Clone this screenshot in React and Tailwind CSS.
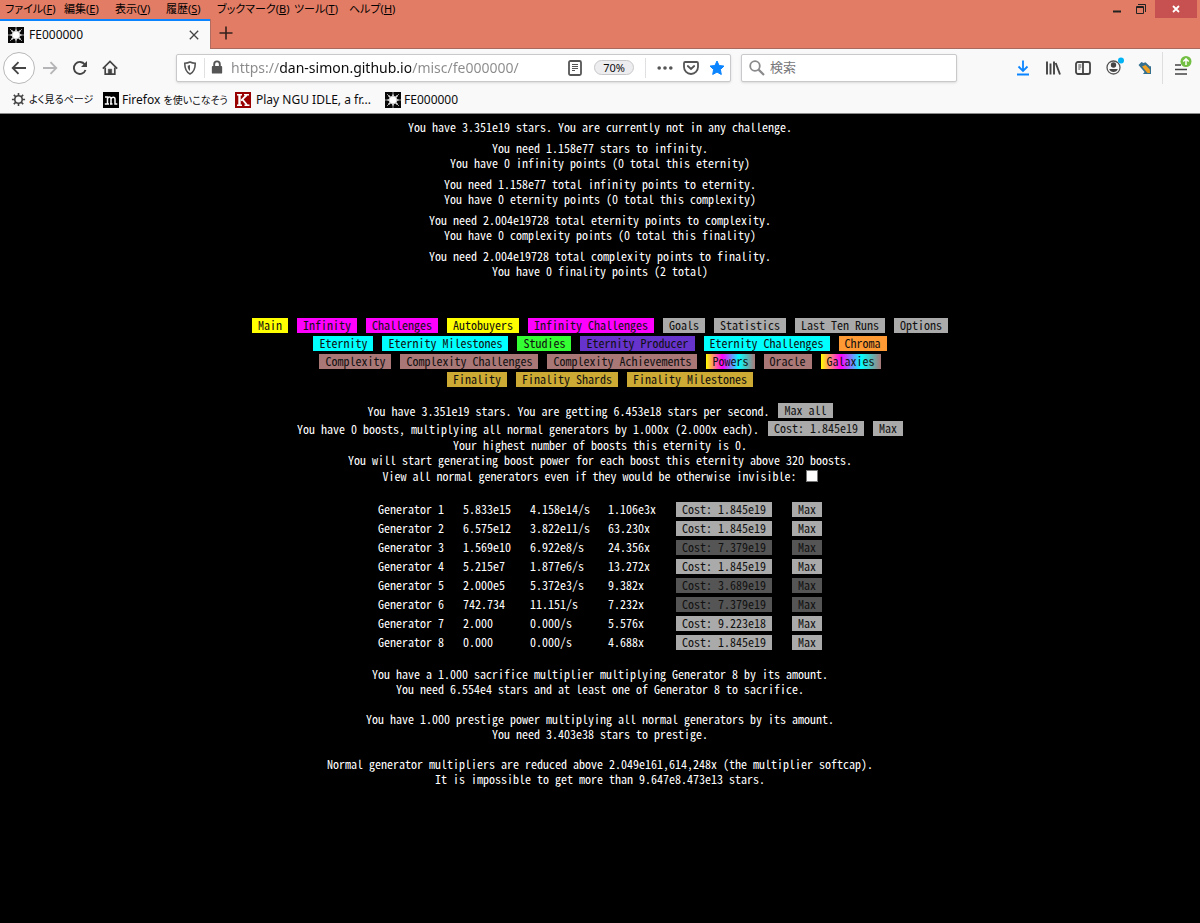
import React, { useState } from "react";

const MENUS = [
  { label: "ファイル", hint: "F", width: "w-[59px]" },
  { label: "編集", hint: "E", width: "w-[51px]" },
  { label: "表示", hint: "V", width: "w-[51px]" },
  { label: "履歴", hint: "S", width: "w-[51px]" },
  { label: "ブックマーク", hint: "B", width: "w-[77px]" },
  { label: "ツール", hint: "T", width: "w-[55px]" },
  { label: "ヘルプ", hint: "H", width: "w-[55px]" },
];

const YELLOW = "bg-[#ffff00]";
const MAGENTA = "bg-[#ff00ff]";
const CYAN = "bg-[#00ffff]";
const GRAY = "bg-[#aaaaaa]";
const ROSE = "bg-[#aa7777]";
const GOLD = "bg-[#ccaa33]";
const RAINBOW = "bg-[linear-gradient(90deg,#ffff00,#ff00ff,#00ffff,#aa7777)]";

const TABS = [
  [
    ["Main", YELLOW],
    ["Infinity", MAGENTA],
    ["Challenges", MAGENTA],
    ["Autobuyers", YELLOW],
    ["Infinity Challenges", MAGENTA],
    ["Goals", GRAY],
    ["Statistics", GRAY],
    ["Last Ten Runs", GRAY],
    ["Options", GRAY],
  ],
  [
    ["Eternity", CYAN],
    ["Eternity Milestones", CYAN],
    ["Studies", "bg-[#33ff33]"],
    ["Eternity Producer", "bg-[#6633cc]"],
    ["Eternity Challenges", CYAN],
    ["Chroma", "bg-[#ff9933]"],
  ],
  [
    ["Complexity", ROSE],
    ["Complexity Challenges", ROSE],
    ["Complexity Achievements", ROSE],
    ["Powers", RAINBOW],
    ["Oracle", ROSE],
    ["Galaxies", RAINBOW],
  ],
  [
    ["Finality", GOLD],
    ["Finality Shards", GOLD],
    ["Finality Milestones", GOLD],
  ],
];

const PRESTIGE_INFO = [
  ["You have 3.351e19 stars. You are currently not in any challenge."],
  [
    "You need 1.158e77 stars to infinity.",
    "You have 0 infinity points (0 total this eternity)",
  ],
  [
    "You need 1.158e77 total infinity points to eternity.",
    "You have 0 eternity points (0 total this complexity)",
  ],
  [
    "You need 2.004e19728 total eternity points to complexity.",
    "You have 0 complexity points (0 total this finality)",
  ],
  [
    "You need 2.004e19728 total complexity points to finality.",
    "You have 0 finality points (2 total)",
  ],
];

const GENERATORS = [
  { amount: "5.833e15", rate: "4.158e14/s", mult: "1.106e3x", cost: "1.845e19", canBuy: true },
  { amount: "6.575e12", rate: "3.822e11/s", mult: "63.230x", cost: "1.845e19", canBuy: true },
  { amount: "1.569e10", rate: "6.922e8/s", mult: "24.356x", cost: "7.379e19", canBuy: false },
  { amount: "5.215e7", rate: "1.877e6/s", mult: "13.272x", cost: "1.845e19", canBuy: true },
  { amount: "2.000e5", rate: "5.372e3/s", mult: "9.382x", cost: "3.689e19", canBuy: false },
  { amount: "742.734", rate: "11.151/s", mult: "7.232x", cost: "7.379e19", canBuy: false },
  { amount: "2.000", rate: "0.000/s", mult: "5.576x", cost: "9.223e18", canBuy: true },
  { amount: "0.000", rate: "0.000/s", mult: "4.688x", cost: "1.845e19", canBuy: true },
];

const FOOTNOTES = [
  [
    "You have a 1.000 sacrifice multiplier multiplying Generator 8 by its amount.",
    "You need 6.554e4 stars and at least one of Generator 8 to sacrifice.",
  ],
  [
    "You have 1.000 prestige power multiplying all normal generators by its amount.",
    "You need 3.403e38 stars to prestige.",
  ],
  [
    "Normal generator multipliers are reduced above 2.049e161,614,248x (the multiplier softcap).",
    "It is impossible to get more than 9.647e8.473e13 stars.",
  ],
];

function StarIcon() {
  return (
    <svg viewBox="0 0 16 16" className="size-4 shrink-0">
      <rect width="16" height="16" fill="#080808" />
      <path d="M8 0v16M0 8h16" stroke="#999" strokeWidth="1" />
      <path d="M2 2l12 12M14 2L2 14" stroke="#999" strokeWidth="1" />
      <path d="M3.500 3.500l9 9M12.500 3.500l-9 9M8 2.500v11M2.500 8h11" stroke="#ddd" strokeWidth="1.600" />
      <circle cx="8" cy="8" r="4.300" fill="#ccc" />
      <circle cx="8" cy="8" r="3.300" fill="#fff" />
    </svg>
  );
}

function MenuBar() {
  return (
    <div className="flex h-[19px] items-start justify-between">
      <nav className="flex pl-[5px] [font-feature-settings:'palt']">
        {MENUS.map((m) => (
          <button key={m.hint} className={`${m.width} h-[18px] text-left text-[11px] leading-[18px] whitespace-nowrap text-black`}>
            {m.label}(<u>{m.hint}</u>)
          </button>
        ))}
      </nav>
      <div className="flex h-[18px] pr-[3px]">
        <button aria-label="Minimize" className="flex w-6 items-center justify-center">
          <svg viewBox="0 0 12 12" className="size-3">
            <path d="M2 8.500h8" stroke="#222" strokeWidth="2" />
          </svg>
        </button>
        <button aria-label="Restore" className="mr-[2px] flex w-6 items-center justify-center">
          <svg viewBox="0 0 12 12" className="size-3" fill="none" stroke="#222">
            <path d="M1.500 3.500h7v7h-7zM1 4.500h8M3 1.500h7.500V9" />
          </svg>
        </button>
        <button aria-label="Close" className="flex w-[42px] items-center justify-center bg-[#c75050]">
          <svg viewBox="0 0 8 8" className="size-2" stroke="#fff" strokeWidth="1.800">
            <path d="M1 1l6 6M7 1L1 7" />
          </svg>
        </button>
      </div>
    </div>
  );
}

function TabStrip() {
  return (
    <div className="flex h-[30px] border-b border-[#a9695c]">
      <div className="-mb-px flex w-[210px] items-center border-t-2 border-[#0a84ff] bg-[#f9f9fa] pl-2 text-[12px] text-[#0c0c0d]">
        <StarIcon />
        <span className="ml-[5px] flex-1">FE000000</span>
        <button aria-label="Close tab" className="mr-[9px] p-[2px]">
          <svg viewBox="0 0 10 10" className="size-[10px]" stroke="#444" strokeWidth="1.300">
            <path d="M.8.8l8.400 8.400M9.200.8L.8 9.200" />
          </svg>
        </button>
      </div>
      <button aria-label="New tab" className="border-l border-[#b06c5e] pr-2 pb-[2px] pl-2">
        <svg viewBox="0 0 14 14" className="size-[14px]" stroke="#33201c" strokeWidth="1.600">
          <path d="M7 .5v13M.5 7h13" />
        </svg>
      </button>
    </div>
  );
}

function NavButton({ label, children, className = "w-[30px]" }) {
  return (
    <button aria-label={label} className={`${className} flex h-8 shrink-0 items-center justify-center`}>
      {children}
    </button>
  );
}

function UrlBar() {
  return (
    <div className="flex h-7 flex-1 items-center rounded-[2px] border border-[#c9c9cb] bg-white shadow-sm">
      <button aria-label="Site protection" className="w-[27px] pl-[6px]">
        <svg viewBox="0 0 16 16" className="size-[14px]" fill="none" stroke="#555" strokeWidth="1.800">
          <path d="M8 1.200c2 1 4 1.300 6 1.300 0 6-1.200 10-6 12.300C3.200 12.500 2 8.500 2 2.500c2 0 4-.3 6-1.300z" />
          <path d="M8 4.500v7c-2-1.500-2.600-3.500-2.700-6.200z" fill="#555" stroke="none" />
        </svg>
      </button>
      <span className="h-5 w-px bg-[#e0e0e2]" />
      <svg viewBox="0 0 14 16" className="ml-[5px] h-[15px] w-[14px]">
        <path d="M4 7V4.500a3 3 0 0 1 6 0V7" fill="none" stroke="#555" strokeWidth="2" />
        <rect x="1.500" y="6.500" width="11" height="8" rx="1" fill="#555" />
      </svg>
      <input
        aria-label="Address"
        defaultValue="https://dan-simon.github.io/misc/fe000000/"
        className="ml-[7px] h-6 min-w-0 flex-1 bg-[linear-gradient(90deg,#8a8a8c_0_48px,#0c0c0d_48px_180px,#8a8a8c_180px)] bg-clip-text text-[14px] text-transparent outline-none"
      />
      <button aria-label="Reader view" className="mr-3">
        <svg viewBox="0 0 14 16" className="h-4 w-[14px]" fill="none" stroke="#555">
          <rect x="1" y="1" width="12" height="14" rx="1.500" strokeWidth="1.800" />
          <path d="M4 4.500h6M4 6.500h6M4 8.500h6M4 10.500h3" />
        </svg>
      </button>
      <button className="h-[15px] w-10 rounded-full border border-[#c8c8ca] bg-[#ededf0] text-[11px] leading-[13px] text-[#0c0c0d]">
        70%
      </button>
      <span className="ml-[11px] h-5 w-px bg-[#e0e0e2]" />
      <div className="flex items-center gap-[10px] pr-[5px] pl-[11px]">
        <button aria-label="Page actions">
          <svg viewBox="0 0 16 16" className="size-4" fill="#555">
            <circle cx="2.200" cy="8" r="1.800" />
            <circle cx="8" cy="8" r="1.800" />
            <circle cx="13.800" cy="8" r="1.800" />
          </svg>
        </button>
        <button aria-label="Save to Pocket">
          <svg viewBox="0 0 16 16" className="size-4" fill="none" stroke="#555" strokeWidth="1.800">
            <path d="M2.200 2h11.600c.7 0 1.200.5 1.200 1.200V7A7 7 0 0 1 1 7V3.200C1 2.500 1.500 2 2.200 2z" />
            <path d="M4.800 6L8 9l3.200-3" strokeLinecap="round" />
          </svg>
        </button>
        <button aria-label="Bookmarked">
          <svg viewBox="0 0 16 16" className="size-4" fill="#0a84ff" stroke="#0a84ff" strokeLinejoin="round">
            <path d="M8 1l2.100 4.500 4.900.6-3.600 3.400.9 5L8 12.100l-4.300 2.400.9-5L1 6.100l4.900-.6z" />
          </svg>
        </button>
      </div>
    </div>
  );
}

function Toolbar() {
  return (
    <div className="flex h-[37px] items-center pl-[3px]">
      <button aria-label="Back" className="flex size-8 shrink-0 items-center justify-center rounded-full border border-[#b8b8ba] bg-white">
        <svg viewBox="0 0 16 16" className="size-4" fill="none" stroke="#444" strokeWidth="1.800">
          <path d="M15 8H2M7.500 2.200L1.700 8l5.800 5.800" />
        </svg>
      </button>
      <NavButton label="Forward">
        <svg viewBox="0 0 16 16" className="size-4" fill="none" stroke="#b5b5b7" strokeWidth="1.800">
          <path d="M1 8h13M8.500 2.200L14.300 8l-5.800 5.800" />
        </svg>
      </NavButton>
      <NavButton label="Reload">
        <svg viewBox="0 0 16 16" className="size-4" fill="none" stroke="#444" strokeWidth="1.900">
          <path d="M12.800 4.500A6 6 0 1 0 13.500 10" />
          <path d="M15 1v6H9z" fill="#444" stroke="none" />
        </svg>
      </NavButton>
      <NavButton label="Home">
        <svg viewBox="0 0 16 16" className="size-4" fill="none" stroke="#444" strokeWidth="1.700">
          <path d="M.8 8.700L8 1.500l7.200 7.200" />
          <path d="M3.200 7.500V14.200h9.600V7.500" />
          <path d="M6.300 14V9.200h3.400V14z" fill="#444" strokeWidth=".6" />
        </svg>
      </NavButton>
      <div className="w-[51px] shrink-0" />
      <UrlBar />
      <label className="ml-[10px] flex h-7 w-[216px] shrink-0 items-center rounded-[2px] border border-[#c9c9cb] bg-white pl-[7px] shadow-sm">
        <svg viewBox="0 0 16 16" className="size-4" fill="none" stroke="#8a8a8c" strokeWidth="1.800">
          <circle cx="6" cy="6" r="4.800" />
          <path d="M9.600 9.600l5.400 5.400" strokeWidth="2.200" />
        </svg>
        <input aria-label="検索" placeholder="検索" className="ml-[5px] w-40 text-[13px] outline-none placeholder:text-[#77777a]" />
      </label>
      <div className="ml-[51px] flex shrink-0 items-center">
        <NavButton label="Downloads">
          <svg viewBox="0 0 16 16" className="size-4" fill="none" stroke="#0a84ff" strokeWidth="1.800">
            <path d="M8 .5v10M3.500 6.500L8 11l4.500-4.500M2 14.500h12" />
          </svg>
        </NavButton>
        <NavButton label="Library">
          <svg viewBox="0 0 16 16" className="size-4" stroke="#444" strokeWidth="1.900">
            <path d="M2 1.500v13M5.500 3.500v11M9 1.500v13M10.700 3l4.300 11.500" />
          </svg>
        </NavButton>
        <NavButton label="Sidebar">
          <svg viewBox="0 0 16 16" className="size-4" fill="none" stroke="#444" strokeWidth="1.800">
            <rect x="1" y="2" width="14" height="12" rx="2" />
            <path d="M8 2v12" />
            <path d="M3.300 5h3M3.300 7h3M3.300 9h2" strokeWidth="1" />
          </svg>
        </NavButton>
        <NavButton label="Account" className="w-[34px]">
          <svg viewBox="0 0 20 20" className="mb-1 size-5">
            <circle cx="8.500" cy="11.500" r="6.500" fill="none" stroke="#555" strokeWidth="1.300" />
            <circle cx="8.500" cy="9" r="2.700" fill="#444" />
            <path d="M4.200 13h8.600c-.5 2-2.300 3-4.300 3s-3.800-1-4.300-3z" fill="#444" />
            <circle cx="16" cy="4.500" r="3" fill="#00b3f4" />
          </svg>
        </NavButton>
        <NavButton label="Extension" className="w-[26px]">
          <svg viewBox="0 0 14 14" className="size-[14px]">
            <path d="M.5 4L3.500 1l2 1 2-.8L12 5.500l1-.5v8H5l1.500-2z" fill="#35708f" />
            <path d="M4 5.500L7.500 4l4.300 4.500.2 3.500H9.500z" fill="#f0a020" />
          </svg>
        </NavButton>
        <span className="ml-[4px] h-8 w-px bg-[#dededf]" />
        <NavButton label="Menu" className="w-[37px]">
          <svg viewBox="0 0 20 20" className="mb-1 size-5">
            <path d="M3 9h6M3 13.500h12M3 18h12" stroke="#444" strokeWidth="1.700" />
            <circle cx="14" cy="5.500" r="5.500" fill="#73bf43" />
            <path d="M14 9V3M11.300 5.500L14 2.800l2.700 2.700" fill="none" stroke="#fff" strokeWidth="1.500" />
          </svg>
        </NavButton>
      </div>
    </div>
  );
}

function BookmarksBar() {
  return (
    <div className="flex h-7 items-center border-b border-[#8a8a8c] pl-[11px] text-[12px] whitespace-nowrap text-[#0c0c0d] [font-feature-settings:'palt']">
      <a href="#frequent" className="flex w-[92px] items-center gap-[3px] text-[10px]">
        <svg viewBox="0 0 16 16" className="size-[15px]" fill="none" stroke="#444">
          <circle cx="8" cy="8" r="4" strokeWidth="1.800" />
          <path d="M8 1v3M8 12v3M1 8h3M12 8h3M3 3l2.200 2.200M10.800 10.800L13 13M13 3l-2.200 2.200M5.200 10.800L3 13" strokeWidth="1.700" />
        </svg>
        よく見るページ
      </a>
      <a href="#firefox" className="flex w-[132px] items-center gap-[3px]">
        <svg viewBox="0 0 16 16" className="size-4">
          <rect width="16" height="16" />
          <path d="M2 5h2.500v7M1.800 12H6M4.500 6.800C5.500 4.500 8 4.500 8 7v5M8 7c.8-2.500 4-2.500 4 0v5h2.300M7 12h2.500" fill="none" stroke="#fff" strokeWidth="1.500" />
        </svg>
        <span>
          Firefox <span className="text-[10px]">を使いこなそう</span>
        </span>
      </a>
      <a href="#ngu" className="flex w-[150px] items-center gap-[5px]">
        <svg viewBox="0 0 16 16" className="size-4">
          <rect width="16" height="16" fill="#900" />
          <path d="M2 2.800h5M2 13.200h5M9 2.800h5M9.500 13.200h5" stroke="#fff" strokeWidth="1.500" />
          <path d="M4.500 3v10" stroke="#fff" strokeWidth="2.400" />
          <path d="M11.800 3L6 8.600M7.500 7.500l4.500 5.500" stroke="#fff" strokeWidth="1.900" />
        </svg>
        Play NGU IDLE, a fr...
      </a>
      <a href="#fe" className="flex items-center gap-[3px]">
        <StarIcon />
        FE000000
      </a>
    </div>
  );
}

function GameButton({ color = GRAY, disabled = false, children }) {
  return (
    <button disabled={disabled} className={`${color} h-[15px] px-[6px] pb-[2px] align-middle leading-[13px] whitespace-nowrap text-[#111]`}>
      {children}
    </button>
  );
}

function GeneratorTable() {
  return (
    <table className="mt-[15px] w-[444px] table-fixed text-left">
      <colgroup>
        <col className="w-[85px]" />
        <col className="w-[67px]" />
        <col className="w-[78px]" />
        <col className="w-[68px]" />
        <col className="w-[116px]" />
        <col />
      </colgroup>
      <tbody>
        {GENERATORS.map((g, i) => (
          <tr key={i} className="h-[19px]">
            <td>Generator {i + 1}</td>
            <td>{g.amount}</td>
            <td>{g.rate}</td>
            <td>{g.mult}</td>
            <td>
              <GameButton color={g.canBuy ? GRAY : "bg-[#555555]"} disabled={!g.canBuy}>
                Cost: {g.cost}
              </GameButton>
            </td>
            <td>
              <GameButton color={g.canBuy ? GRAY : "bg-[#555555]"} disabled={!g.canBuy}>
                Max
              </GameButton>
            </td>
          </tr>
        ))}
      </tbody>
    </table>
  );
}

export default function App() {
  const [viewAll, setViewAll] = useState(false);

  return (
    <div className="flex min-h-screen flex-col bg-black font-['Noto_Sans','Noto_Sans_CJK_JP',sans-serif]">
      <header className="bg-[#f9f9fa]">
        <div className="bg-[#e27c65]">
          <MenuBar />
          <TabStrip />
        </div>
        <Toolbar />
        <BookmarksBar />
      </header>

      <main className="flex flex-col items-center pt-[5px] pb-8 text-center font-['Noto_Sans_Mono_CJK_JP','Liberation_Mono',monospace] text-[12px] leading-[15px] text-white">
        <section className="flex flex-col gap-[6px]">
          {PRESTIGE_INFO.map((lines) => (
            <div key={lines[0]}>
              {lines.map((line) => (
                <p key={line}>{line}</p>
              ))}
            </div>
          ))}
        </section>

        <nav className="mt-10 flex flex-col gap-[3px]">
          {TABS.map((row) => (
            <div key={row[0][0]} className="flex justify-center gap-[9px]">
              {row.map(([name, color]) => (
                <GameButton key={name} color={color}>
                  {name}
                </GameButton>
              ))}
            </div>
          ))}
        </nav>

        <section className="mt-[15px] flex flex-col items-center">
          <div className="flex h-[17px] items-center gap-[9px]">
            <p>You have 3.351e19 stars. You are getting 6.453e18 stars per second.</p>
            <GameButton>Max all</GameButton>
          </div>
          <div className="flex h-[18px] items-center gap-[9px]">
            <p>You have 0 boosts, multiplying all normal generators by 1.000x (2.000x each).</p>
            <GameButton>Cost: 1.845e19</GameButton>
            <GameButton>Max</GameButton>
          </div>
          <p>Your highest number of boosts this eternity is 0.</p>
          <p>You will start generating boost power for each boost this eternity above 320 boosts.</p>
          <label className="flex h-[17px] items-center gap-[9px]">
            View all normal generators even if they would be otherwise invisible:
            <input
              type="checkbox"
              checked={viewAll}
              onChange={(e) => setViewAll(e.target.checked)}
              className="size-3 appearance-none border border-[#777] bg-white checked:bg-[#0a84ff]"
            />
          </label>
        </section>

        <GeneratorTable />

        <section className="mt-[15px] flex flex-col gap-[15px]">
          {FOOTNOTES.map((lines) => (
            <div key={lines[0]}>
              {lines.map((line) => (
                <p key={line}>{line}</p>
              ))}
            </div>
          ))}
        </section>
      </main>
    </div>
  );
}
